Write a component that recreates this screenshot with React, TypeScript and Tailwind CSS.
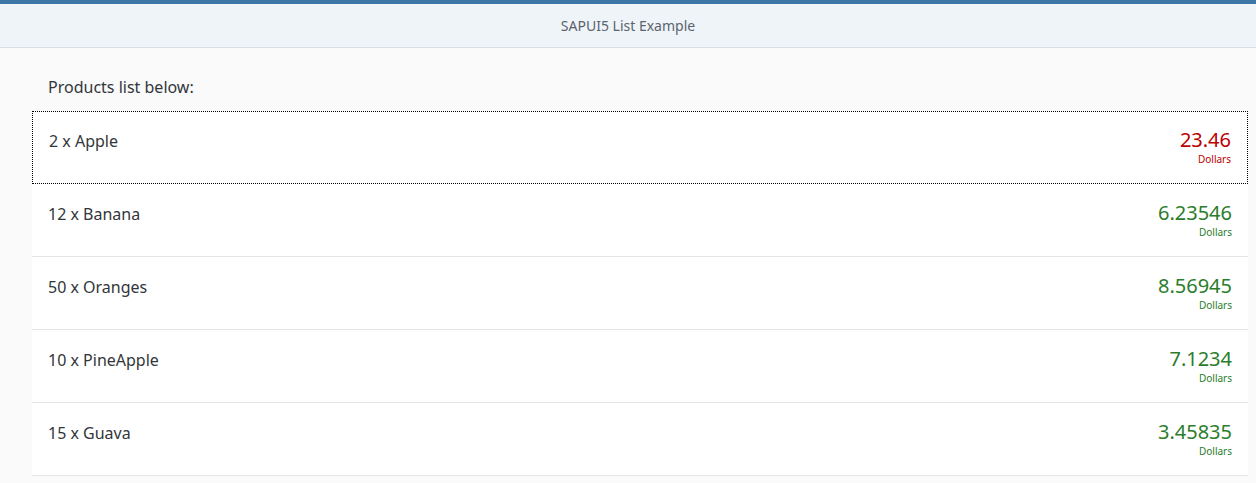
import React from "react";

const items = [
  { name: "2 x Apple", price: "23.46", red: true },
  { name: "12 x Banana", price: "6.23546" },
  { name: "50 x Oranges", price: "8.56945" },
  { name: "10 x PineApple", price: "7.1234" },
  { name: "15 x Guava", price: "3.45835" },
];

export default function App() {
  return (
    <div className="w-[1256px] h-[483px] bg-[#fafafa] overflow-hidden" style={{ fontFamily: '"Noto Sans", Arial, sans-serif' }}>
      <div className="h-[4px] bg-[#3f76a8]" />
      <div className="h-[44px] bg-[#eff4f9] border-b border-[#d9dfe7] flex items-center justify-center text-[14px] text-[#5a646e]">
        SAPUI5 List Example
      </div>
      <div className="px-[32px] pr-[8px]">
        <div className="h-[63px] flex items-end pb-[12px] pl-[16px] text-[16px] text-[#32363a]">Products list below:</div>
        <div className="bg-white">
          {items.map((it, i) => (
            <div
              key={i}
              className={`h-[73px] flex justify-between px-[16px] ${i === 0 ? "border border-dotted border-black" : "border-b border-[#e5e5e5]"}`}
            >
              <div className={`text-[16px] text-[#32363a] ${i === 0 ? "pt-[17px]" : "pt-[18px]"}`}>{it.name}</div>
              <div className={`flex flex-col items-end ${i === 0 ? "pt-[16px]" : "pt-[17px]"} ${it.red ? "text-[#bb0000]" : "text-[#2b7d2b]"}`}>
                <div className="text-[20px] leading-[24px]">{it.price}</div>
                <div className="text-[10px] leading-[14px]">Dollars</div>
              </div>
            </div>
          ))}
        </div>
      </div>
    </div>
  );
}
